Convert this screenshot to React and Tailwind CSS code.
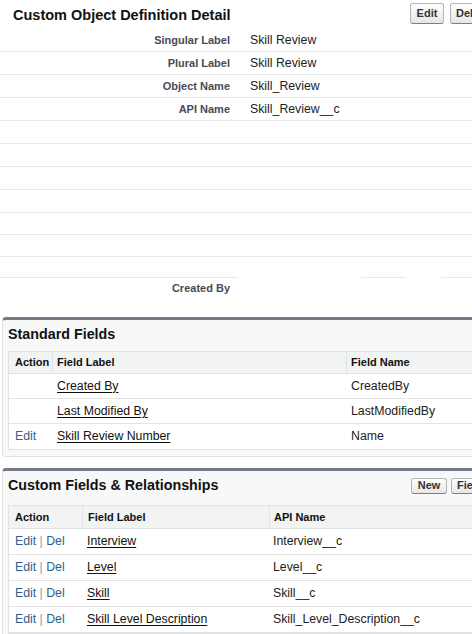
import React from "react";

const font = "font-['Liberation_Sans',Arial,Helvetica,sans-serif]";

function Btn({ children, className = "" }) {
  return (
    <div
      className={`shrink-0 rounded-[3px] border border-[#b5b5b5] border-b-[#7f7f7f] bg-gradient-to-b from-white to-[#e6e6e6] text-[11px] font-bold text-[#333] leading-none flex items-center ${className}`}
    >
      {children}
    </div>
  );
}

function DetailRow({ label, value, h = "h-[23px]", line = true }) {
  return (
    <div className={`flex items-center ${h} ${line ? "border-b border-[#e8e8e8]" : ""}`}>
      <div className="w-[230px] text-right text-[11px] font-bold text-[#4a4a56]">{label}</div>
      <div className="pl-[20px] text-[12.3px] text-[#222]">{value}</div>
    </div>
  );
}

export default function App() {
  const std = [
    { l: "Created By", n: "CreatedBy" },
    { l: "Last Modified By", n: "LastModifiedBy" },
    { l: "Skill Review Number", n: "Name" },
  ];
  const custom = [
    { l: "Interview", n: "Interview__c" },
    { l: "Level", n: "Level__c" },
    { l: "Skill", n: "Skill__c" },
    { l: "Skill Level Description", n: "Skill_Level_Description__c" },
  ];
  return (
    <div className={`w-[472px] h-[634px] overflow-hidden bg-white ${font}`}>
      <div className="w-[560px]">
        {/* Detail section */}
        <div className="flex h-[29px] items-start">
          <div className="shrink-0 pl-[13px] pt-[5px] text-[14.5px] font-bold text-[#111] w-[410px]">
            Custom Object Definition Detail
          </div>
          <Btn className="mt-[3px] w-[34px] h-[21px] justify-center">Edit</Btn>
          <Btn className="mt-[3px] ml-[6px] w-[44px] h-[21px] pl-[5px]">Delete</Btn>
        </div>
        <DetailRow label="Singular Label" value="Skill Review" />
        <DetailRow label="Plural Label" value="Skill Review" />
        <DetailRow label="Object Name" value="Skill_Review" />
        <DetailRow label="API Name" value="Skill_Review__c" />
        <DetailRow label="" value="" />
        <DetailRow label="" value="" />
        <DetailRow label="" value="" />
        <DetailRow label="" value="" />
        <DetailRow label="" value="" h="h-[22px]" />
        <DetailRow label="" value="" h="h-[22px]" />
        <div className="h-[21px] flex items-end">
          <div className="w-[240px] border-b border-[#e8e8e8]" />
          <div className="ml-[123px] w-[45px] border-b border-[#e8e8e8]" />
          <div className="ml-[35px] w-[120px] border-b border-[#e8e8e8]" />
        </div>
        <DetailRow label="Created By" value="" h="h-[20px]" line={false} />
        <div className="h-[19px]" />

        {/* Standard Fields */}
        <div className="ml-[2px] rounded-[4px] border border-[#e0e0e0] border-t-[3px] border-t-[#747b88] bg-[#f8f8f8] pl-[5px] pb-[6px]">
          <div className="h-[31px] flex items-center pb-[1px] text-[14.3px] font-bold text-[#111]">Standard Fields</div>
          <div className="border border-[#e0e3e5] bg-white">
            <div className="flex h-[22px] items-center bg-[#f2f3f3] border-b border-[#e0e3e5] text-[11px] font-bold text-[#111]">
              <div className="w-[43px] pl-[6px]">Action</div>
              <div className="w-[294px] pl-[4px] h-full flex items-center border-l border-[#e0e3e5]">Field Label</div>
              <div className="pl-[4px] h-full flex items-center border-l border-[#e0e3e5]">Field Name</div>
            </div>
            {std.map((r, i) => (
              <div key={i} className={`flex h-[25px] items-center text-[12.3px] ${i < 2 ? "border-b border-[#e3e3e3]" : ""}`}>
                <div className="w-[43px] pl-[6px] text-[#2f5f8e]">{i === 2 ? "Edit" : ""}</div>
                <div className="w-[294px] pl-[5px] text-[#111] underline underline-offset-2">{r.l}</div>
                <div className="pl-[5px] text-[#222]">{r.n}</div>
              </div>
            ))}
          </div>
        </div>
        <div className="h-[11px]" />

        {/* Custom Fields */}
        <div className="ml-[2px] rounded-[4px] border border-[#e0e0e0] border-t-[3px] border-t-[#747b88] bg-[#f8f8f8] pl-[5px] pb-[6px]">
          <div className="h-[34px] flex items-center pb-[5px]">
            <div className="shrink-0 w-[403px] text-[14.3px] font-bold text-[#111]">Custom Fields &amp; Relationships</div>
            <Btn className="w-[36px] h-[16px] justify-center">New</Btn>
            <Btn className="ml-[4px] w-[120px] h-[16px] pl-[5px]">Field Dependencies</Btn>
          </div>
          <div className="border border-[#e0e3e5] bg-white">
            <div className="flex h-[23px] items-center bg-[#f2f3f3] border-b border-[#e0e3e5] text-[11px] font-bold text-[#111]">
              <div className="w-[73px] pl-[6px]">Action</div>
              <div className="w-[187px] pl-[5px] h-full flex items-center border-l border-[#e0e3e5]">Field Label</div>
              <div className="pl-[4px] h-full flex items-center border-l border-[#e0e3e5]">API Name</div>
            </div>
            {custom.map((r, i) => (
              <div key={i} className="flex h-[26px] items-center text-[12.3px] border-b border-[#e3e3e3]">
                <div className="w-[73px] pl-[6px] text-[#2f5f8e]">
                  Edit <span className="text-[#999]">|</span> Del
                </div>
                <div className="w-[187px] pl-[5px] text-[#111] underline underline-offset-2">{r.l}</div>
                <div className="pl-[4px] text-[#222]">{r.n}</div>
              </div>
            ))}
          </div>
        </div>
      </div>
    </div>
  );
}
